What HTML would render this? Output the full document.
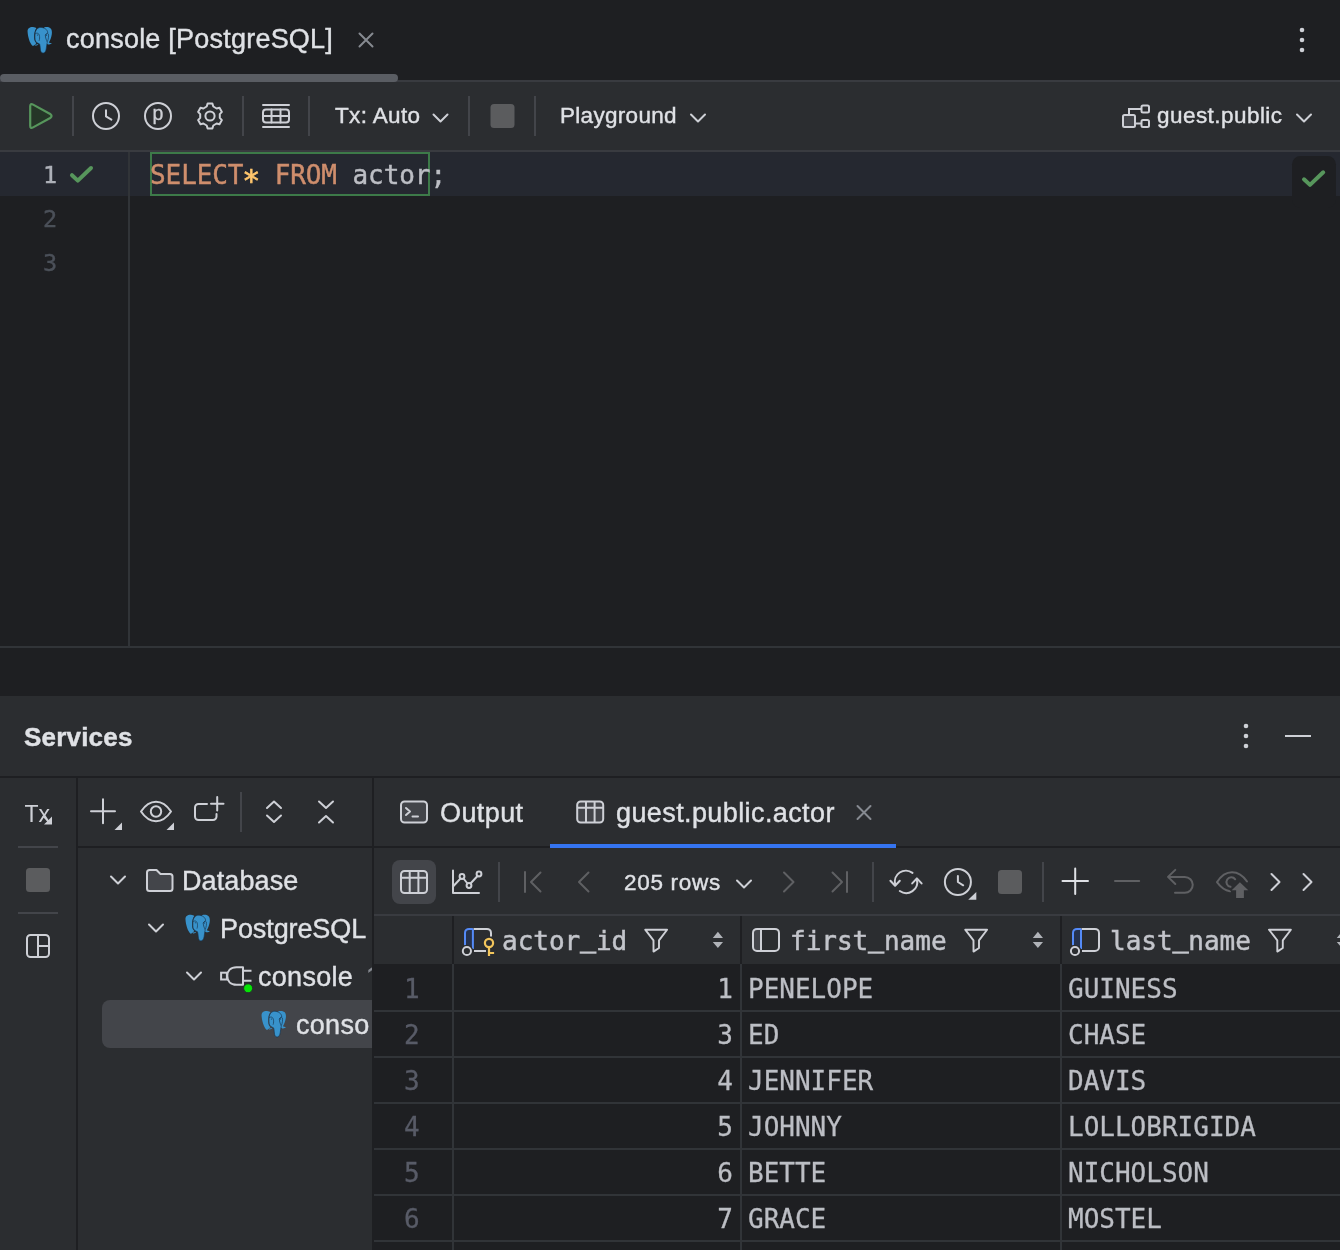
<!DOCTYPE html>
<html lang="en">
<head>
<meta charset="utf-8">
<title>console [PostgreSQL]</title>
<style>
*{box-sizing:border-box;margin:0;padding:0}
html,body{width:1340px;height:1250px;overflow:hidden;background:#1e1f22}
body{position:relative;font-family:"Liberation Sans",sans-serif;font-size:26px;color:#dfe1e5}
.abs{position:absolute}
.t{position:absolute;white-space:nowrap;line-height:1;will-change:transform;-webkit-text-stroke:.4px}
.mono{font-family:"DejaVu Sans Mono","Liberation Mono",monospace}
.hl{position:absolute;background:#393b40}
.vl{position:absolute;background:#43454a;width:2px}
svg{position:absolute;overflow:visible}
.ic{fill:none;stroke:#ced0d6;stroke-width:2;stroke-linecap:round;stroke-linejoin:round}
.dim{stroke:#5f6063}
.gl{background:#313438}
.hd{font-size:26px;color:#c3c5cb;-webkit-text-stroke:.5px #c3c5cb}
.cell{font-size:26px;color:#bcbec4;-webkit-text-stroke:.3px #bcbec4}
.us{position:relative;top:-3.5px;-webkit-text-stroke:1.1px #c3c5cb}
.rn{font-size:26px;color:#585b67;-webkit-text-stroke:.3px #585b67}
</style>
</head>
<body>

<!-- ============ EDITOR TAB BAR ============ -->
<div class="abs" id="tabbar" style="left:0;top:0;width:1340px;height:80px;background:#1e1f22"></div>
<div class="t" id="tabtitle" style="left:66px;top:26px;font-size:27px;letter-spacing:.22px;color:#dfe1e5">console [PostgreSQL]</div>
<div class="hl" style="left:0;top:80px;width:1340px;height:2px"></div>
<div class="abs" id="tabul" style="left:0;top:74px;width:398px;height:8px;background:#5a5d63;border-radius:4px"></div>

<!-- ============ EDITOR TOOLBAR ============ -->
<div class="abs" id="toolbar" style="left:0;top:82px;width:1340px;height:68px;background:#2b2d30"></div>
<div class="t" style="left:335px;top:105px;font-size:22.5px;letter-spacing:.36px">Tx: Auto</div>
<div class="t" style="left:560px;top:105px;font-size:22.5px;letter-spacing:.3px">Playground</div>
<div class="t" style="left:1157px;top:105px;font-size:22.5px;letter-spacing:.45px">guest.public</div>
<div class="hl" style="left:0;top:150px;width:1340px;height:2px"></div>

<!-- ============ EDITOR ============ -->
<div class="abs" id="editor" style="left:0;top:152px;width:1340px;height:494px;background:#1e1f22"></div>
<div class="abs" id="curline" style="left:0;top:152px;width:1340px;height:44px;background:#252830"></div>
<div class="abs" style="left:128px;top:152px;width:2px;height:494px;background:#313438"></div>
<div class="t mono" style="left:42.500px;top:164px;font-size:23.500px;color:#adb0b8">1</div>
<div class="t mono" style="left:42.500px;top:208px;font-size:23.500px;color:#4b5059">2</div>
<div class="t mono" style="left:42.500px;top:252px;font-size:23.500px;color:#4b5059">3</div>
<div class="abs" id="stmtbox" style="left:150px;top:152px;width:280px;height:44px;border:2px solid #3d7a49"></div>
<div class="t mono" id="code" style="left:150px;top:162px;font-size:26px;letter-spacing:-.08px;color:#bcbec4;-webkit-text-stroke:.45px"><span style="color:#cf8e6d">SELECT</span><span style="display:inline-block;font-size:30px;line-height:1px;vertical-align:-6.5px;margin:0 -1.200px;color:#ffc66d;-webkit-text-stroke:.7px #ffc66d">*</span> <span style="color:#cf8e6d">FROM</span> actor;</div>
<div class="abs" style="left:0;top:646px;width:1340px;height:2px;background:#313438"></div>

<!-- ============ SERVICES PANEL ============ -->
<div class="abs" id="services" style="left:0;top:696px;width:1340px;height:554px;background:#2b2d30"></div>
<div class="t" style="left:24px;top:724px;font-size:26px;letter-spacing:.2px;font-weight:bold;color:#dfe1e5">Services</div>
<div class="abs" style="left:0;top:776px;width:1340px;height:2px;background:#1e1f22"></div>
<div class="abs" style="left:76px;top:778px;width:2px;height:472px;background:#1e1f22"></div>
<div class="abs" style="left:78px;top:846px;width:1262px;height:2px;background:#1e1f22"></div>
<div class="abs" style="left:372px;top:778px;width:2px;height:472px;background:#1e1f22"></div>

<!-- tree -->
<div class="abs" id="sel" style="left:102px;top:1000px;width:270px;height:48px;background:#43454a;border-radius:8px 0 0 8px"></div>
<div class="t" style="left:182px;top:868px;font-size:27px;letter-spacing:.1px">Database</div>
<div class="t" style="left:220px;top:916px;font-size:27px;letter-spacing:-.1px">PostgreSQL</div>
<div class="t" style="left:258px;top:964px;font-size:27px;letter-spacing:.3px">console</div>
<div class="t" style="left:296px;top:1012px;font-size:27px;letter-spacing:.3px;width:73.5px;overflow:hidden">console</div>

<div class="t" style="left:366px;top:964px;font-size:27px;width:6px;height:13px;overflow:hidden;color:#868a91">1 s</div>

<!-- result tabs -->
<div class="t" style="left:440px;top:800px;font-size:27px;letter-spacing:.4px">Output</div>
<div class="t" style="left:616px;top:800px;font-size:27px;letter-spacing:.4px">guest.public.actor</div>
<div class="abs" style="left:550px;top:844px;width:346px;height:4px;background:#3574f0"></div>

<!-- grid toolbar -->
<div class="t" style="left:624px;top:872px;font-size:22.5px;letter-spacing:.7px">205 rows</div>

<!-- grid -->
<div class="abs" id="grid" style="left:374px;top:964px;width:966px;height:286px;background:#1e1f22"></div>
<!-- grid header -->
<div class="abs" style="left:374px;top:914px;width:966px;height:2px;background:#393b40"></div>
<div class="abs" style="left:452px;top:916px;width:2px;height:48px;background:#1e1f22"></div>
<div class="abs" style="left:740px;top:916px;width:2px;height:48px;background:#1e1f22"></div>
<div class="abs" style="left:1060px;top:916px;width:2px;height:48px;background:#1e1f22"></div>
<div class="t mono hd" style="left:502px;top:928px">actor<span class="us">_</span>id</div>
<div class="t mono hd" style="left:790px;top:928px">first<span class="us">_</span>name</div>
<div class="t mono hd" style="left:1110px;top:928px">last<span class="us">_</span>name</div>
<!-- grid lines -->
<div class="abs gl" style="left:452px;top:964px;width:2px;height:286px"></div>
<div class="abs gl" style="left:740px;top:964px;width:2px;height:286px"></div>
<div class="abs gl" style="left:1060px;top:964px;width:2px;height:286px"></div>
<div class="abs gl" style="left:374px;top:1010px;width:966px;height:2px"></div>
<div class="t mono rn" style="left:404px;top:976px">1</div>
<div class="t mono cell" style="left:453px;top:976px;width:280px;text-align:right">1</div>
<div class="t mono cell" style="left:748px;top:976px">PENELOPE</div>
<div class="t mono cell" style="left:1068px;top:976px">GUINESS</div>
<div class="abs gl" style="left:374px;top:1056px;width:966px;height:2px"></div>
<div class="t mono rn" style="left:404px;top:1022px">2</div>
<div class="t mono cell" style="left:453px;top:1022px;width:280px;text-align:right">3</div>
<div class="t mono cell" style="left:748px;top:1022px">ED</div>
<div class="t mono cell" style="left:1068px;top:1022px">CHASE</div>
<div class="abs gl" style="left:374px;top:1102px;width:966px;height:2px"></div>
<div class="t mono rn" style="left:404px;top:1068px">3</div>
<div class="t mono cell" style="left:453px;top:1068px;width:280px;text-align:right">4</div>
<div class="t mono cell" style="left:748px;top:1068px">JENNIFER</div>
<div class="t mono cell" style="left:1068px;top:1068px">DAVIS</div>
<div class="abs gl" style="left:374px;top:1148px;width:966px;height:2px"></div>
<div class="t mono rn" style="left:404px;top:1114px">4</div>
<div class="t mono cell" style="left:453px;top:1114px;width:280px;text-align:right">5</div>
<div class="t mono cell" style="left:748px;top:1114px">JOHNNY</div>
<div class="t mono cell" style="left:1068px;top:1114px">LOLLOBRIGIDA</div>
<div class="abs gl" style="left:374px;top:1194px;width:966px;height:2px"></div>
<div class="t mono rn" style="left:404px;top:1160px">5</div>
<div class="t mono cell" style="left:453px;top:1160px;width:280px;text-align:right">6</div>
<div class="t mono cell" style="left:748px;top:1160px">BETTE</div>
<div class="t mono cell" style="left:1068px;top:1160px">NICHOLSON</div>
<div class="abs gl" style="left:374px;top:1240px;width:966px;height:2px"></div>
<div class="t mono rn" style="left:404px;top:1206px">6</div>
<div class="t mono cell" style="left:453px;top:1206px;width:280px;text-align:right">7</div>
<div class="t mono cell" style="left:748px;top:1206px">GRACE</div>
<div class="t mono cell" style="left:1068px;top:1206px">MOSTEL</div>


<!-- ============ ICON OVERLAY (page coords) ============ -->
<svg id="icons" width="1340" height="1250" viewBox="0 0 1340 1250" style="left:0;top:0;pointer-events:none">
<!-- elephant (tab) -->
<g transform="translate(20,20)">
 <path d="M7.600 12 C7.200 8.200 10 6.800 13 7 C14.600 7.100 15.800 7.600 16.400 8.300 C14.800 10 14.200 13 14.200 17 C14.200 20.500 15 22 16.400 23 C15 25 13.600 26 12.400 25.800 C9.600 23 7.900 16.500 7.600 12 Z" fill="#3892cb"/>
 <path d="M14.200 24.700 C15.600 24.900 17.200 24.500 18.600 23.700 C18 25.100 16.600 25.700 15.200 25.600 Z" fill="#3892cb"/>
 <path d="M24 7.500 C26.400 6.700 29 7 30.400 8.200 C31.800 9.400 32.200 11.600 31.800 14.200 C31.400 17 30.200 20.400 28.900 22.400 C29.800 23.200 31.200 23.200 32 23.100 C31.400 24.200 29.800 24.700 28.400 24.500 C27.400 24.400 26.600 23.600 26.200 22.200 L24.500 13 Z" fill="#3892cb"/>
 <path d="M20.600 7.400 C17.600 7.400 15.400 10 15.100 13.500 C14.900 16 14.800 19.500 15.600 21.200 C16.600 23 18.600 23.400 19.600 24 C20.300 26 20.200 29 20.600 30.600 C21 32.400 22.200 33.200 23.200 33.100 C24.600 33 25.800 31.600 26.200 29 C26.600 26.500 26.800 24 27.300 22.200 C26.400 20 25.400 17.600 25.400 15.600 C25.600 14 27.600 13.400 27.700 12.400 C27.400 9.600 24.400 7.400 20.600 7.400 Z" fill="#3892cb" stroke="#17324a" stroke-width=".65"/>
 <path d="M15.200 13.700 C16.800 12.700 18.600 13.100 19.200 14.900 C19.800 16.700 19.700 19.300 19.100 20.800" fill="none" stroke="#17324a" stroke-width=".65"/>
 <path d="M25.400 15.500 C25.500 14 27 13.200 28.200 13.500 M28.400 14 C28.800 16.500 28.400 19 27.400 21.600" fill="none" stroke="#17324a" stroke-width=".65"/>
 <circle cx="17.400" cy="15" r=".5" fill="#17324a"/><circle cx="26.600" cy="15.200" r=".5" fill="#17324a"/>
</g>
<!-- tab close x -->
<path d="M359.5 33.5 L372.5 46.5 M372.5 33.5 L359.5 46.5" fill="none" stroke="#868a91" stroke-width="2" stroke-linecap="round"/>
<!-- kebab -->
<circle cx="1302" cy="30" r="2.3" fill="#ced0d6"/><circle cx="1302" cy="40" r="2.3" fill="#ced0d6"/><circle cx="1302" cy="50" r="2.3" fill="#ced0d6"/>

<!-- run -->
<path d="M30.2 106.3 Q30.2 103 33.1 104.600 L50.200 114 Q52.900 116 50.200 118 L33.100 127.400 Q30.200 129 30.200 125.700 Z" fill="#253627" stroke="#57965c" stroke-width="2.200" stroke-linejoin="round"/>
<!-- clock -->
<circle class="ic" cx="106" cy="116" r="13"/>
<path class="ic" d="M106 110.200 V116.400 L111.400 119.600"/>
<!-- P -->
<circle class="ic" cx="158" cy="116" r="13"/>
<text x="152.600" y="120.300" font-family="Liberation Sans, sans-serif" font-size="19.500" fill="#ced0d6" stroke="#ced0d6" stroke-width=".3">p</text>
<!-- gear -->
<path class="ic" transform="translate(0,.5)" d="M207.6 103.1 L212.4 103.1 L213.3 106.0 L216.6 108.0 L219.5 107.2 L221.9 111.4 L219.8 113.6 L219.8 117.4 L221.9 119.6 L219.5 123.8 L216.6 123.0 L213.3 125.0 L212.4 127.9 L207.6 127.9 L206.7 125.0 L203.4 123.0 L200.5 123.8 L198.1 119.6 L200.2 117.4 L200.2 113.6 L198.1 111.4 L200.5 107.2 L203.4 108.0 L206.7 106.0Z"/>
<circle class="ic" cx="210" cy="116" r="4.600"/>
<!-- table view -->
<path class="ic" d="M263 105 H289 M263 127 H289"/>
<rect class="ic" x="263" y="109.5" width="26" height="13" rx="3"/>
<path class="ic" d="M263 116 H289 M271.5 109.5 V122.5 M280.5 109.5 V122.5" stroke-width="2"/>
<!-- chevrons -->
<path class="ic" d="M433.5 114.5 L440.5 121.5 L447.5 114.5"/>
<path class="ic" d="M691 114.5 L698 121.5 L705 114.5"/>
<path class="ic" d="M1297 114.5 L1304 121.5 L1311 114.5"/>
<!-- stop -->
<rect x="490.5" y="104" width="24" height="24" rx="3.5" fill="#5b5c5e"/>
<!-- schema icon -->
<rect x="1123" y="115" width="12" height="12" rx="1.5" fill="#43454a" stroke="#ced0d6" stroke-width="2"/>
<rect x="1141.5" y="105.5" width="7.5" height="7" rx="1.5" fill="none" stroke="#ced0d6" stroke-width="2"/>
<rect x="1141.5" y="120" width="7.5" height="7" rx="1.5" fill="none" stroke="#ced0d6" stroke-width="2"/>
<path d="M1129 115 V109 H1141.5 M1135 123.5 H1141.5" fill="none" stroke="#ced0d6" stroke-width="2"/>
<!-- editor checks -->
<path d="M72 175.200 L77.800 180.600 L91 168" fill="none" stroke="#57965c" stroke-width="4" stroke-linecap="round" stroke-linejoin="round"/>
<rect x="1292" y="156" width="44" height="52" rx="8.500" fill="#1e1f22"/>
<path d="M1304 179.300 L1310 184.900 L1323.200 172.300" fill="none" stroke="#57965c" stroke-width="4" stroke-linecap="round" stroke-linejoin="round"/>

<!-- toolbar separators -->
<g fill="#43454a">
<rect x="72" y="96" width="2" height="40"/><rect x="242" y="96" width="2" height="40"/><rect x="308" y="96" width="2" height="40"/>
<rect x="468" y="96" width="2" height="40"/><rect x="534" y="96" width="2" height="40"/>
<rect x="18" y="846" width="40" height="2"/><rect x="18" y="912" width="40" height="2"/>
<rect x="240" y="792" width="2" height="40"/>
<rect x="498" y="862" width="2" height="40"/><rect x="872" y="862" width="2" height="40"/><rect x="1042" y="862" width="2" height="40"/>
</g>
<!-- services header icons -->
<circle cx="1246" cy="726" r="2.3" fill="#ced0d6"/><circle cx="1246" cy="736" r="2.3" fill="#ced0d6"/><circle cx="1246" cy="746" r="2.3" fill="#ced0d6"/>
<path d="M1285 736 H1311" fill="none" stroke="#ced0d6" stroke-width="2"/>
<!-- Tx icon -->
<text x="24.5" y="822" font-family="Liberation Sans, sans-serif" font-size="23" fill="#ced0d6">Tx</text>
<path d="M52 816.5 V824.5 H44 Z" fill="#ced0d6"/>
<path d="M43 816 L49 822" stroke="#ced0d6" stroke-width="1.6" fill="none"/>
<!-- left stop -->
<rect x="26" y="868" width="24" height="24" rx="3.5" fill="#5b5c5e"/>
<!-- layout icon -->
<rect class="ic" x="27" y="935" width="22" height="22" rx="3.5"/>
<path class="ic" d="M38 935 V957 M38 946 H49"/>
<!-- plus w/ dropdown -->
<path class="ic" d="M91 811.3 H115 M103 799.3 V823.3"/>
<path d="M122 822.5 V830 H114.5 Z" fill="#ced0d6"/>
<!-- eye w/ dropdown -->
<path class="ic" d="M141 811.5 C145.5 804.8 150.5 801.8 156 801.8 C161.500 801.800 166.500 804.800 171.000 811.500 C166.500 818.200 161.500 821.200 156.000 821.200 C150.500 821.200 145.500 818.200 141.000 811.500 Z"/>
<circle class="ic" cx="156" cy="811.5" r="5.2"/>
<path d="M174 822.5 V830 H166.500 Z" fill="#ced0d6"/>
<!-- new tab -->
<path class="ic" d="M207 804 H198.500 A3.500 3.500 0 0 0 195.000 807.500 V816.500 A3.500 3.500 0 0 0 198.500 820.000 H213.000 A3.500 3.500 0 0 0 216.500 816.500 V814.000"/>
<path class="ic" d="M211 803.800 H223.500 M217.200 797 V810.500"/>
<!-- expand / collapse -->
<path class="ic" d="M267 808 L274 801.500 L281 808 M267 815.500 L274 822 L281 815.500"/>
<path class="ic" d="M319 801.500 L326 808 L333 801.500 M319 822.500 L326 816 L333 822.500"/>
<!-- tree chevrons -->
<path class="ic" d="M111 876.5 L118 883.500 L125 876.500"/>
<path class="ic" d="M149 924.500 L156 931.500 L163 924.500"/>
<path class="ic" d="M187 972.500 L194 979.500 L201 972.500"/>
<!-- folder -->
<path d="M147 872.500 A2.500 2.500 0 0 1 149.500 870 H156.500 L160.500 874 H170 A2.500 2.500 0 0 1 172.500 876.500 V888.500 A2.500 2.500 0 0 1 170 891 H149.500 A2.500 2.500 0 0 1 147 888.500 Z" fill="#43454a" stroke="#ced0d6" stroke-width="2" stroke-linejoin="round"/>
<!-- plug -->
<rect x="221.100" y="972.700" width="5.800" height="6.800" fill="none" stroke="#ced0d6" stroke-width="2"/><path d="M243 967.200 H236.500 C230.500 967.200 227.300 971 227.300 976 C227.300 981 230.500 984.800 236.500 984.800 H243 Z M243.500 970.800 H251.500 M243.500 980.800 H251.500" fill="none" stroke="#ced0d6" stroke-width="2" stroke-linejoin="round"/>
<circle cx="248.100" cy="988.300" r="4.500" fill="#06e406" stroke="#23302a" stroke-width="1"/>

<!-- elephants in tree -->
<g transform="translate(177.9,907.8)">
 <path d="M7.600 12 C7.200 8.200 10 6.800 13 7 C14.600 7.100 15.800 7.600 16.400 8.300 C14.800 10 14.200 13 14.200 17 C14.200 20.500 15 22 16.400 23 C15 25 13.600 26 12.400 25.800 C9.600 23 7.900 16.500 7.600 12 Z" fill="#3892cb"/>
 <path d="M14.200 24.700 C15.600 24.900 17.200 24.500 18.600 23.700 C18 25.100 16.600 25.700 15.200 25.600 Z" fill="#3892cb"/>
 <path d="M24 7.500 C26.400 6.700 29 7 30.400 8.200 C31.800 9.400 32.200 11.600 31.800 14.200 C31.400 17 30.200 20.400 28.900 22.400 C29.800 23.200 31.200 23.200 32 23.100 C31.400 24.200 29.800 24.700 28.400 24.500 C27.400 24.400 26.600 23.600 26.200 22.200 L24.500 13 Z" fill="#3892cb"/>
 <path d="M20.600 7.400 C17.600 7.400 15.400 10 15.100 13.500 C14.900 16 14.800 19.500 15.600 21.200 C16.600 23 18.600 23.400 19.600 24 C20.300 26 20.200 29 20.600 30.600 C21 32.400 22.200 33.200 23.200 33.100 C24.600 33 25.800 31.600 26.200 29 C26.600 26.500 26.800 24 27.300 22.200 C26.400 20 25.400 17.600 25.400 15.600 C25.600 14 27.600 13.400 27.700 12.400 C27.400 9.600 24.400 7.400 20.600 7.400 Z" fill="#3892cb" stroke="#17324a" stroke-width=".65"/>
 <path d="M15.200 13.700 C16.800 12.700 18.600 13.100 19.200 14.900 C19.800 16.700 19.700 19.300 19.100 20.800" fill="none" stroke="#17324a" stroke-width=".65"/>
 <path d="M25.400 15.500 C25.500 14 27 13.200 28.200 13.500 M28.400 14 C28.800 16.500 28.400 19 27.400 21.600" fill="none" stroke="#17324a" stroke-width=".65"/>
 <circle cx="17.400" cy="15" r=".5" fill="#17324a"/><circle cx="26.600" cy="15.200" r=".5" fill="#17324a"/>
</g>
<g transform="translate(254,1003.9)">
 <path d="M7.600 12 C7.200 8.200 10 6.800 13 7 C14.600 7.100 15.800 7.600 16.400 8.300 C14.800 10 14.200 13 14.200 17 C14.200 20.500 15 22 16.400 23 C15 25 13.600 26 12.400 25.800 C9.600 23 7.900 16.500 7.600 12 Z" fill="#3892cb"/>
 <path d="M14.200 24.700 C15.600 24.900 17.200 24.500 18.600 23.700 C18 25.100 16.600 25.700 15.200 25.600 Z" fill="#3892cb"/>
 <path d="M24 7.500 C26.400 6.700 29 7 30.400 8.200 C31.800 9.400 32.200 11.600 31.800 14.200 C31.400 17 30.200 20.400 28.900 22.400 C29.800 23.200 31.200 23.200 32 23.100 C31.400 24.200 29.800 24.700 28.400 24.500 C27.400 24.400 26.600 23.600 26.200 22.200 L24.500 13 Z" fill="#3892cb"/>
 <path d="M20.600 7.400 C17.600 7.400 15.400 10 15.100 13.500 C14.900 16 14.800 19.500 15.600 21.200 C16.600 23 18.600 23.400 19.600 24 C20.300 26 20.200 29 20.600 30.600 C21 32.400 22.200 33.200 23.200 33.100 C24.600 33 25.800 31.600 26.200 29 C26.600 26.500 26.800 24 27.300 22.200 C26.400 20 25.400 17.600 25.400 15.600 C25.600 14 27.600 13.400 27.700 12.400 C27.400 9.600 24.400 7.400 20.600 7.400 Z" fill="#3892cb" stroke="#17324a" stroke-width=".65"/>
 <path d="M15.200 13.700 C16.800 12.700 18.600 13.100 19.200 14.900 C19.800 16.700 19.700 19.300 19.100 20.800" fill="none" stroke="#17324a" stroke-width=".65"/>
 <path d="M25.400 15.500 C25.500 14 27 13.200 28.200 13.500 M28.400 14 C28.800 16.500 28.400 19 27.400 21.600" fill="none" stroke="#17324a" stroke-width=".65"/>
 <circle cx="17.400" cy="15" r=".5" fill="#17324a"/><circle cx="26.600" cy="15.200" r=".5" fill="#17324a"/>
</g>
<!-- Output tab: terminal icon -->
<rect x="401" y="801.500" width="26" height="21" rx="3.500" fill="#43454a" stroke="#ced0d6" stroke-width="2"/>
<path class="ic" d="M406 808 L410 811.500 L406 815 M412.500 816.500 H418" stroke-width="1.700"/>
<!-- result tab: table icon -->
<rect x="577.200" y="801.500" width="26" height="21" rx="3.500" fill="#43454a" stroke="#ced0d6" stroke-width="2"/>
<path d="M577.200 807.800 H603.200 M586 801.500 V822.500 M594.600 801.500 V822.500" fill="none" stroke="#ced0d6" stroke-width="2"/>
<!-- close x result tab -->
<path d="M857.500 806 L870.500 819 M870.500 806 L857.500 819" fill="none" stroke="#868a91" stroke-width="2" stroke-linecap="round"/>
<!-- grid toolbar: table button -->
<rect x="392" y="860" width="44" height="44" rx="8" fill="#43454a"/>
<rect x="401" y="871" width="26" height="22" rx="3.500" fill="none" stroke="#ced0d6" stroke-width="2"/>
<path d="M401 877.800 H427 M409.700 871 V893 M418.400 871 V893" fill="none" stroke="#ced0d6" stroke-width="2"/>
<!-- chart -->
<path class="ic" d="M453 870.500 V893 H479" stroke-width="2"/>
<path class="ic" d="M453.500 886 L460.500 878.500 M463.500 878.500 L467.500 883.500 M470.500 883.500 L477.500 876" stroke-width="2"/>
<circle class="ic" cx="462" cy="876.500" r="2.400" stroke-width="1.600"/><circle class="ic" cx="469" cy="885.500" r="2.400" stroke-width="1.600"/><circle class="ic" cx="479" cy="874" r="2.400" stroke-width="1.600"/>
<!-- pager (dim) -->
<path class="ic dim" d="M525 872 V892 M540.500 872.500 L531 882 L540.500 891.500"/>
<path class="ic dim" d="M588.500 872.500 L579 882 L588.500 891.500"/>
<path class="ic" d="M737 880.500 L744 887.500 L751 880.500"/>
<path class="ic dim" d="M784 872.500 L793.500 882 L784 891.500"/>
<path class="ic dim" d="M832.500 872.500 L842 882 L832.500 891.500 M847 872 V892"/>
<!-- refresh -->
<path class="ic" d="M895.200 884.500 A11 11 0 0 1 912.500 872.900 M916.800 879.200 A11 11 0 0 1 899.800 891"/>
<path class="ic" d="M890.400 880.800 L895.100 885.800 L899.800 880.800 M912.200 883.400 L916.900 878.400 L921.600 883.400"/>
<!-- clock w/ dropdown -->
<circle class="ic" cx="957.900" cy="882" r="13"/>
<path class="ic" d="M957.900 876 V882 L963.200 885.300"/>
<path d="M976.300 892 V899.700 H968.200 Z" fill="#ced0d6"/>
<!-- stop -->
<rect x="998" y="870" width="24" height="24" rx="3.500" fill="#5b5c5e"/>
<!-- plus / minus / undo / eye-up / chevrons -->
<path d="M1062.500 881 H1088 M1075.200 868.500 V894" fill="none" stroke="#dfe1e5" stroke-width="2" stroke-linecap="round"/>
<path class="ic dim" d="M1115 880.900 H1139.200"/>
<path class="ic dim" d="M1175.300 869.900 L1168 876.900 L1175.300 884 M1168.500 876.900 H1184.800 A7.950 7.950 0 0 1 1184.800 892.800 H1175"/>
<path class="ic dim" d="M1217 882.100 C1221.500 875 1226.500 872.200 1232 872.200 C1237.500 872.200 1243 875.500 1247 881.500 M1217 882.100 C1220.500 887 1225 890.500 1230 891.300"/>
<path class="ic dim" d="M1235.200 879.300 A4.800 4.800 0 1 0 1230.500 886.800"/>
<path d="M1239.900 882.300 L1248.300 890.200 H1243.900 V898 H1236.100 V890.200 H1231.700 Z" fill="#5f6063" stroke="#2b2d30" stroke-width="1.600" paint-order="stroke"/>
<path class="ic" d="M1271.500 874 L1279.500 882 L1271.500 890"/>
<path class="ic" d="M1303.500 874 L1311.500 882 L1303.500 890"/>

<!-- header column icons -->
<!-- actor_id -->
<path d="M473.500 928.900 H487 A4 4 0 0 1 491 932.900 V936.500 M474 951 H486" fill="none" stroke="#ced0d6" stroke-width="2"/>
<path d="M472.900 928.900 H469 A4 4 0 0 0 465 932.900 V946 H472.900 Z" fill="#25324d"/>
<path d="M472.900 928.900 H469 A4 4 0 0 0 465 932.900 V945.500 M472.900 928.900 V949" fill="none" stroke="#548af7" stroke-width="2"/>
<circle cx="466.900" cy="951" r="4.100" fill="#2b2d30" stroke="#2b2d30" stroke-width="4.200"/>
<circle cx="466.900" cy="951" r="4.100" fill="#2b2d30" stroke="#ced0d6" stroke-width="2"/>
<g fill="none" stroke="#2b2d30" stroke-width="4.400"><circle cx="489" cy="943" r="4.100"/><path d="M489 947.200 V955.900 M489 953 H494.100" stroke-linecap="square"/></g>
<g fill="none" stroke="#f2c55c" stroke-width="2.200"><circle cx="489" cy="943" r="4.100"/><path d="M489 947.200 V955.900 M489 953 H494.100"/></g>
<!-- first_name -->
<path d="M757 929.500 H761 V950.400 H757 A3.500 3.500 0 0 1 753.500 947 V933 A3.500 3.500 0 0 1 757 929.500 Z" fill="#43454a"/>
<rect x="753" y="928.900" width="26" height="22.100" rx="4" fill="none" stroke="#ced0d6" stroke-width="2"/>
<path d="M761 928.900 V951" fill="none" stroke="#ced0d6" stroke-width="2"/>
<!-- last_name -->
<path d="M1081.500 928.900 H1095 A4 4 0 0 1 1099 932.900 V947 A4 4 0 0 1 1095 951 H1082" fill="none" stroke="#ced0d6" stroke-width="2"/>
<path d="M1081 928.900 H1077 A4 4 0 0 0 1073 932.900 V946 H1081 Z" fill="#25324d"/>
<path d="M1081 928.900 H1077 A4 4 0 0 0 1073 932.900 V945.500 M1081 928.900 V949" fill="none" stroke="#548af7" stroke-width="2"/>
<circle cx="1075" cy="951" r="4.100" fill="#2b2d30" stroke="#2b2d30" stroke-width="4.200"/>
<circle cx="1075" cy="951" r="4.100" fill="#2b2d30" stroke="#ced0d6" stroke-width="2"/>
<!-- filters -->
<path d="M645.2 929.7 L667.1 929.7 L659.0 940.4 L659.0 948.0 L653.5 951.6 L653.5 940.4 Z" fill="none" stroke="#ced0d6" stroke-width="1.900" stroke-linejoin="round"/>
<path d="M965.2 929.7 L987.1 929.7 L979.0 940.4 L979.0 948.0 L973.5 951.6 L973.5 940.4 Z" fill="none" stroke="#ced0d6" stroke-width="1.900" stroke-linejoin="round"/>
<path d="M1269.0 929.7 L1290.9 929.7 L1282.8 940.4 L1282.8 948.0 L1277.3 951.6 L1277.3 940.4 Z" fill="none" stroke="#ced0d6" stroke-width="1.900" stroke-linejoin="round"/>
<!-- sort arrows -->
<g fill="#b0b3b8">
<path d="M717.9 931.800 L723.0 938 H712.8 Z M717.9 948 L723.0 941.900 H712.8 Z"/>
<path d="M1037.9 931.800 L1043.0 938 H1032.8 Z M1037.9 948 L1043.0 941.900 H1032.8 Z"/>
<path d="M1341.9 931.800 L1347.0 938 H1336.8 Z M1341.9 948 L1347.0 941.900 H1336.8 Z"/>
</g>

<!--ICONS5-->
</svg>

</body>
</html>
